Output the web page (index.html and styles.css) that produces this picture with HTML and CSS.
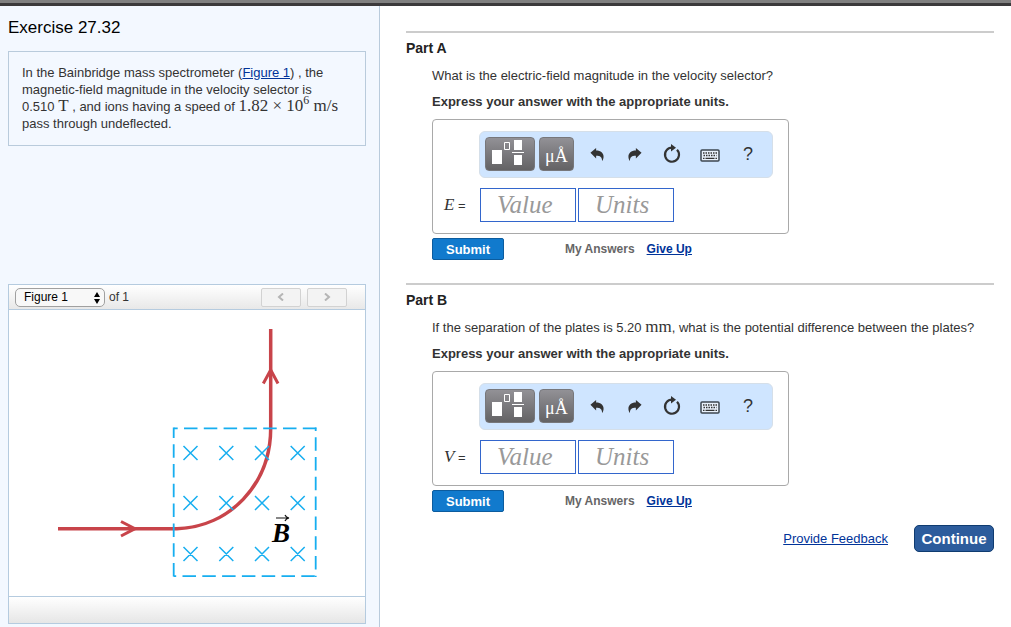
FILE: index.html
```
<!DOCTYPE html>
<html lang="en">
<head>
    <meta charset="UTF-8">
    <meta name="viewport" content="width=device-width, initial-scale=1.0">
    <title>Exercise 27.32</title>
    <link rel="stylesheet" href="styles.css">
</head>
<body>
    <!-- Shared toolbar icons -->
    <svg class="icon-defs" aria-hidden="true">
        <symbol id="icon-template" viewBox="0 0 50 34">
            <path fill="#fff" d="M7 13h10v14H7zM29 3h8v10h-8zM29 18h8v10h-8zM27 15h12v1H27z"/>
            <path fill="none" stroke="#fff" d="M19.500 5.500h5v7h-5z"/>
        </symbol>
        <symbol id="icon-undo" viewBox="0 0 16 16">
            <path d="M.5 6 7 .5v3c5.500 0 8.500 3 8.500 7 0 2-.7 3.500-1.500 5C13.500 11 12 9.500 7 9.500v3z"/>
        </symbol>
        <symbol id="icon-redo" viewBox="0 0 16 16">
            <path d="M15.500 6 9 .5v3C3.500 3.500.5 6.500.5 10.500c0 2 .7 3.500 1.500 5C2.500 11 4 9.500 9 9.500v3z"/>
        </symbol>
        <symbol id="icon-reset" viewBox="0 0 20 20">
            <path fill="none" stroke="#333" stroke-width="2.200" d="M15 5.800A7 7 0 1 1 10 3.700"/>
            <path d="M9 0l5 3.700-5 3.800z"/>
        </symbol>
        <symbol id="icon-keyboard" viewBox="0 0 20 13">
            <rect x="1" y="1" width="18" height="11" rx="1" fill="#e8f1fb" stroke="#3c4650" stroke-width="1.500"/>
            <path fill="none" stroke="#333" stroke-width="1.300" stroke-dasharray="1.500 1" d="M3 4h14M3.500 6.500h13"/>
            <path fill="none" stroke="#333" stroke-width="1.300" d="M3 9.300h1.500M5.500 9.300h9M15.500 9.300H17"/>
        </symbol>
    </svg>

    <header class="top-bar"></header>

    <div class="page">
        <aside class="sidebar">
            <h1>Exercise 27.32</h1>
            <p class="intro">
                In the Bainbridge mass spectrometer (<a href="#figure">Figure 1</a>) , the magnetic-field magnitude in the velocity selector is 0.510 <span class="math">T</span> , and ions having a speed of <span class="math">1.82 × 10<sup>6</sup> m/s</span> pass through undeflected.
            </p>

            <section class="figure-panel" id="figure">
                <div class="figure-header">
                    <div class="figure-select">
                        <select id="figures" aria-label="Figure">
                            <option>Figure 1</option>
                        </select>
                        <svg viewBox="0 0 8 12" aria-hidden="true"><path d="M4 0l3 5H1zM4 12l3-5H1z"/></svg>
                    </div>
                    <label for="figures">of 1</label>
                    <div class="figure-nav">
                        <button type="button" aria-label="Previous figure" disabled><svg viewBox="0 0 8 8"><path d="M6 .5 2 4l4 3.500"/></svg></button>
                        <button type="button" aria-label="Next figure" disabled><svg viewBox="0 0 8 8"><path d="M2 .5 6 4 2 7.500"/></svg></button>
                    </div>
                </div>
                <svg class="diagram" viewBox="0 0 356 286" role="img" aria-label="Ion path through a magnetic field">
                    <g fill="none" stroke="#c8444a" stroke-width="3.500">
                        <path d="M49 218.700H168C220 217 261.700 175 261.700 118V19"/>
                        <path stroke-width="3" d="M112 211.500L126 218.700L112 226"/>
                        <path stroke-width="3" d="M254.300 73.500L261.700 60L269 73.500"/>
                    </g>
                    <g fill="none" stroke="#16aef0" stroke-width="1.800" stroke-dasharray="13.500 6.300">
                        <path stroke-dashoffset="9.500" d="M164.700 118.300H307.300"/>
                        <path stroke-dashoffset="3" d="M164.700 117.400V267"/>
                        <path stroke-dashoffset="10" d="M306.700 117.400V267"/>
                        <path stroke-dashoffset="11" d="M164.700 266.200H307.300"/>
                    </g>
                    <path class="field" d="M174.500 136l14 14m0-14l-14 14M210.300 136l14 14m0-14l-14 14M246 136l14 14m0-14l-14 14M281.700 136l14 14m0-14l-14 14
                        M174.500 186l14 14m0-14l-14 14M210.300 186l14 14m0-14l-14 14M246 186l14 14m0-14l-14 14M281.700 186l14 14m0-14l-14 14
                        M174.500 237l14 14m0-14l-14 14M210.300 237l14 14m0-14l-14 14M246 237l14 14m0-14l-14 14M281.700 237l14 14m0-14l-14 14"/>
                    <path fill="none" stroke="#111" stroke-width="1.200" d="M267 208h12.500M276 205q1 2.500 4 3q-3 .5-4 3"/>
                    <text x="263" y="232">B</text>
                </svg>
                <div class="figure-footer"></div>
            </section>
        </aside>

        <main class="content">
            <section class="part">
                <h2>Part A</h2>
                <form class="part-body">
                    <p>What is the electric-field magnitude in the velocity selector?</p>
                    <p><strong>Express your answer with the appropriate units.</strong></p>
                    <div class="answer-box">
                        <div class="toolbar">
                            <button type="button" class="tool-dark tool-template" aria-label="Templates"><svg><use href="#icon-template"/></svg></button>
                            <button type="button" class="tool-dark tool-symbols">μÅ</button>
                            <button type="button" class="tool" aria-label="Undo"><svg class="icon-small"><use href="#icon-undo"/></svg></button>
                            <button type="button" class="tool" aria-label="Redo"><svg class="icon-small"><use href="#icon-redo"/></svg></button>
                            <button type="button" class="tool" aria-label="Reset"><svg class="icon-large"><use href="#icon-reset"/></svg></button>
                            <button type="button" class="tool tool-keyboard" aria-label="Keyboard"><svg class="icon-keyboard"><use href="#icon-keyboard"/></svg></button>
                            <button type="button" class="tool">?</button>
                        </div>
                        <label for="value-a"><i>E</i> =</label>
                        <div class="fields">
                            <input type="text" id="value-a" placeholder="Value">
                            <input type="text" aria-label="Units" placeholder="Units">
                        </div>
                    </div>
                    <div class="actions">
                        <button type="button" class="submit">Submit</button>
                        <span class="my-answers">My Answers</span>
                        <a href="#give-up">Give Up</a>
                    </div>
                </form>
            </section>

            <section class="part">
                <h2>Part B</h2>
                <form class="part-body">
                    <p>If the separation of the plates is 5.20 <span class="math">mm</span>, what is the potential difference between the plates?</p>
                    <p><strong>Express your answer with the appropriate units.</strong></p>
                    <div class="answer-box">
                        <div class="toolbar">
                            <button type="button" class="tool-dark tool-template" aria-label="Templates"><svg><use href="#icon-template"/></svg></button>
                            <button type="button" class="tool-dark tool-symbols">μÅ</button>
                            <button type="button" class="tool" aria-label="Undo"><svg class="icon-small"><use href="#icon-undo"/></svg></button>
                            <button type="button" class="tool" aria-label="Redo"><svg class="icon-small"><use href="#icon-redo"/></svg></button>
                            <button type="button" class="tool" aria-label="Reset"><svg class="icon-large"><use href="#icon-reset"/></svg></button>
                            <button type="button" class="tool tool-keyboard" aria-label="Keyboard"><svg class="icon-keyboard"><use href="#icon-keyboard"/></svg></button>
                            <button type="button" class="tool">?</button>
                        </div>
                        <label for="value-b"><i>V</i> =</label>
                        <div class="fields">
                            <input type="text" id="value-b" placeholder="Value">
                            <input type="text" aria-label="Units" placeholder="Units">
                        </div>
                    </div>
                    <div class="actions">
                        <button type="button" class="submit">Submit</button>
                        <span class="my-answers">My Answers</span>
                        <a href="#give-up">Give Up</a>
                    </div>
                </form>
            </section>

            <footer class="page-footer">
                <a href="#feedback">Provide Feedback</a>
                <button type="button" class="continue">Continue</button>
            </footer>
        </main>
    </div>
</body>
</html>
```
FILE: styles.css
```
* {
    box-sizing: border-box;
}
body {
    margin: 0;
    min-height: 100vh;
    display: flex;
    flex-direction: column;
    font-family: "Liberation Sans", Arial, sans-serif;
    font-size: 13px;
    line-height: 17px;
    color: #333;
    background: #fff;
}
h1, h2, p {
    margin: 0;
}
a {
    color: #003399;
}
button, input, select {
    font-family: inherit;
    margin: 0;
    padding: 0;
}
.icon-defs {
    position: absolute;
    width: 0;
    height: 0;
}
.top-bar {
    height: 6px;
    background: #808080;
    border-bottom: 3px solid #3b393b;
}
.page {
    flex: 1;
    display: flex;
}

/* Left column */
.sidebar {
    flex: 0 0 380px;
    display: flex;
    flex-direction: column;
    padding: 12px 13px 3px 8px;
    background: #f3f8ff;
    border-right: 1px solid #b9cbdc;
}
.sidebar h1 {
    font-size: 17px;
    line-height: 20px;
    font-weight: normal;
    color: #000;
    margin-bottom: 13px;
}
.intro {
    padding: 12px 24px 13px 13px;
    border: 1px solid #b9cbdc;
}
.math {
    font-family: "Liberation Serif", "Times New Roman", serif;
    font-size: 17px;
    line-height: 16px;
}
.math sup {
    font-size: 12px;
    line-height: 0;
}
.figure-panel {
    margin-top: auto;
    background: #fff;
    border: 1px solid #b5cbdf;
}
.figure-header {
    display: flex;
    align-items: center;
    gap: 4px;
    height: 25px;
    padding: 0 18px 0 6px;
    background: linear-gradient(#fff, #e8e8e8);
    border-bottom: 1px solid #b5cbdf;
}
.figure-select {
    position: relative;
}
.figure-select select {
    appearance: none;
    display: block;
    width: 90px;
    height: 19px;
    padding-left: 8px;
    font-size: 12px;
    color: #000;
    background: #f8f8f8;
    border: 1px solid #a0a0a0;
    border-radius: 5px;
}
.figure-select svg {
    position: absolute;
    top: 4px;
    right: 4px;
    width: 8px;
    height: 12px;
    pointer-events: none;
}
.figure-header label {
    font-size: 12px;
}
.figure-nav {
    display: flex;
    gap: 6px;
    margin-left: auto;
}
.figure-nav button {
    display: flex;
    align-items: center;
    justify-content: center;
    width: 40px;
    height: 19px;
    background: #f3f3f3;
    border: 1px solid #d2d2d2;
    border-radius: 2px;
}
.figure-nav svg {
    width: 8px;
    height: 8px;
    fill: none;
    stroke: #b5b5b5;
    stroke-width: 2;
}
.diagram {
    display: block;
    width: 100%;
}
.diagram text {
    font: italic bold 27px "Liberation Serif", serif;
    fill: #000;
}
.diagram .field {
    fill: none;
    stroke: #16aef0;
    stroke-width: 1.5;
}
.figure-footer {
    height: 27px;
    background: linear-gradient(#fff, #e6e6e6);
    border-top: 1px solid #b5cbdf;
}

/* Right column */
.content {
    flex: 1;
    padding: 25px 17px 0 26px;
}
.part {
    border-top: 2px solid #ccc;
}
.part + .part {
    margin-top: 23px;
}
.part h2 {
    padding: 7px 0 10px;
    font-size: 14px;
    line-height: 17px;
    color: #222;
}
.part-body {
    padding-left: 26px;
}
.part-body p {
    margin-bottom: 9px;
}
.answer-box {
    display: grid;
    grid-template-columns: 35px auto;
    justify-content: start;
    align-items: center;
    row-gap: 10px;
    max-width: 357px;
    padding: 11px;
    border: 1px solid #a9a9a9;
    border-radius: 4px;
}
.toolbar {
    grid-column: 2;
    display: flex;
    align-items: flex-start;
    width: 294px;
    height: 47px;
    padding: 5px;
    background: #cfe5ff;
    border: 1px solid #d5dfe9;
    border-radius: 6px;
}
.toolbar button {
    display: flex;
    align-items: center;
    justify-content: center;
    border: 0;
}
.toolbar .tool-dark {
    height: 34px;
    margin-right: 4px;
    color: #fff;
    background: linear-gradient(#929196, #636264);
    border: 1px solid #77777b;
    border-radius: 4px;
}
.tool-template {
    width: 50px;
}
.tool-template svg {
    width: 50px;
    height: 34px;
    flex: none;
}
.tool-symbols {
    width: 35px;
    padding-top: 4px;
    font-family: "Liberation Serif", serif;
    font-size: 18px;
}
.tool {
    width: 38px;
    height: 34px;
    font-size: 18px;
    color: #333;
    background: none;
}
.tool svg {
    fill: #333;
}
.tool-keyboard {
    padding-top: 3px;
}
.icon-small {
    width: 14px;
    height: 15px;
}
.icon-large {
    width: 20px;
    height: 20px;
}
.icon-keyboard {
    width: 20px;
    height: 13px;
}
.answer-box label i {
    font-family: "Liberation Serif", serif;
    font-size: 17px;
}
.fields {
    display: flex;
    gap: 2px;
    padding-left: 1px;
}
.fields input {
    width: 96px;
    height: 34px;
    padding-left: 16px;
    font: italic 25px "Liberation Serif", serif;
    border: 1px solid #3366cc;
}
.fields input::placeholder {
    color: #999;
}
.actions {
    display: flex;
    align-items: center;
    margin-top: 4px;
    font-size: 12px;
    font-weight: bold;
}
.submit {
    width: 72px;
    height: 22px;
    margin-right: 61px;
    font-size: 13px;
    font-weight: bold;
    color: #fff;
    background: #117acd;
    border: 1px solid #0c5c9e;
    border-radius: 2px;
}
.my-answers {
    margin-right: 12px;
    color: #666;
}
.page-footer {
    display: flex;
    justify-content: flex-end;
    align-items: center;
    gap: 26px;
    margin-top: 13px;
}
.continue {
    width: 80px;
    height: 27px;
    font-size: 15px;
    font-weight: bold;
    color: #fff;
    background: #2c5c9c;
    border: 1px solid #0f3b70;
    border-radius: 5px;
}
```
